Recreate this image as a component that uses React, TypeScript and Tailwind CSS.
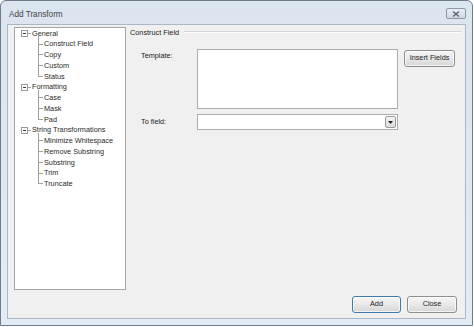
import React from 'react'

interface Group {
  label: string
  items: string[]
}

const groups: Group[] = [
  { label: 'General', items: ['Construct Field', 'Copy', 'Custom', 'Status'] },
  { label: 'Formatting', items: ['Case', 'Mask', 'Pad'] },
  { label: 'String Transformations', items: ['Minimize Whitespace', 'Remove Substring', 'Substring', 'Trim', 'Truncate'] },
]

const font = { fontFamily: '"Liberation Sans", Arial, sans-serif' }

function Expander() {
  return (
    <div className="w-[7px] h-[7px] border border-[#9a9a9a] bg-white flex items-center justify-center">
      <div className="w-[3px] h-px bg-[#333]" />
    </div>
  )
}

function TreeGroup({ g }: { g: Group }) {
  return (
    <div>
      <div className="h-[10.75px] flex items-center">
        <div className="ml-[6px]"><Expander /></div>
        <div className="w-[3px] h-px bg-[#a0a0a0]" />
        <span className="ml-px text-[7.3px] text-[#2a2a2a] leading-none">{g.label}</span>
      </div>
      <div className="relative">
        {/* vertical connector */}
        <div className="absolute left-[23px] top-[-3px] w-px bg-[#a0a0a0]" style={{ height: `${(g.items.length - 1) * 10.75 + 8.4}px` }} />
        {g.items.map(it => (
          <div key={it} className="h-[10.75px] flex items-center">
            <div className="ml-[23px] w-[5px] h-px bg-[#a0a0a0]" />
            <span className="ml-px text-[7.3px] text-[#2a2a2a] leading-none">{it}</span>
          </div>
        ))}
      </div>
    </div>
  )
}

function Btn({ children, w, primary }: { children: React.ReactNode; w: string; primary?: boolean }) {
  return (
    <div
      className={`${w} h-[17px] rounded-[3px] border ${primary ? 'border-[#3d7bad]' : 'border-[#8e8f8f]'} bg-gradient-to-b from-[#f6f6f6] via-[#e8e8e8] to-[#d6d6d6] flex items-center justify-center text-[7.3px] text-[#222] shadow-[inset_0_0_0_1px_rgba(255,255,255,0.7)]`}
    >
      {children}
    </div>
  )
}

export default function App() {
  return (
    <div className="w-[474px] h-[327px] bg-white" style={font}>
      <div className="w-[473px] h-[326px] rounded-t-[6px] border border-[#6f7c8b] bg-gradient-to-b from-[#dbe5f0] to-[#e3ebf4] flex flex-col">
        {/* Title bar */}
        <div className="h-[23px] flex items-start justify-between pl-[8px] pr-[6px]">
          <span className="mt-[10px] text-[8.2px] leading-none text-[#444]">Add Transform</span>
          <div className="mt-[7px] w-[20px] h-[11px] rounded-[2px] border border-[#8a97a6] bg-gradient-to-b from-[#e8eef5] to-[#cfd9e5] flex items-center justify-center">
            <svg width="8" height="6" viewBox="0 0 8 6">
              <path d="M1 0.5 L7 5.5 M7 0.5 L1 5.5" stroke="#5a6574" strokeWidth="1.4" />
            </svg>
          </div>
        </div>

        {/* Client area */}
        <div className="mx-[6px] h-[295px] border border-[#aab7c6] bg-[#f0f0f0] flex flex-col">
          <div className="flex flex-1">
            {/* Tree */}
            <div className="ml-[6px] mt-[2px] w-[112px] h-[263px] border border-[#a5a5a5] bg-white overflow-hidden">
              {groups.map(g => <TreeGroup key={g.label} g={g} />)}
            </div>

            {/* Right panel */}
            <div className="ml-[2px] flex-1 mr-[4px]">
              <div className="mt-[3px] flex items-center h-[10px]">
                <span className="ml-[2px] text-[7.3px] text-[#222] leading-none">Construct Field</span>
                <div className="ml-[5px] flex-1 mt-[-3px]">
                  <div className="h-px bg-[#d5d5d5]" />
                  <div className="h-px bg-white" />
                </div>
              </div>

              <div className="mt-[11px] flex">
                <span className="ml-[13px] w-[56px] mt-[3px] text-[7.3px] text-[#222] leading-none">Template:</span>
                <div className="w-[201px] h-[60px] border border-[#abadb3] bg-white" />
                <div className="ml-[6px] mt-px">
                  <Btn w="w-[51px]">Insert Fields</Btn>
                </div>
              </div>

              <div className="mt-[5px] flex items-center">
                <span className="ml-[13px] w-[56px] text-[7.3px] text-[#222] leading-none">To field:</span>
                <div className="w-[201px] h-[16px] border border-[#abadb3] bg-white flex items-center justify-end pr-px">
                  <div className="w-[11px] h-[12px] rounded-[2px] border border-[#9a9a9a] bg-gradient-to-b from-[#f4f4f4] to-[#dcdcdc] flex items-center justify-center">
                    <svg width="5" height="3" viewBox="0 0 5 3">
                      <path d="M0 0 H5 L2.5 3 Z" fill="#222" />
                    </svg>
                  </div>
                </div>
              </div>
            </div>
          </div>

          {/* Footer buttons */}
          <div className="flex justify-end gap-[6px] pr-[8px] pb-[5px]">
            <Btn w="w-[49px]" primary>Add</Btn>
            <Btn w="w-[50px]">Close</Btn>
          </div>
        </div>
      </div>
    </div>
  )
}
